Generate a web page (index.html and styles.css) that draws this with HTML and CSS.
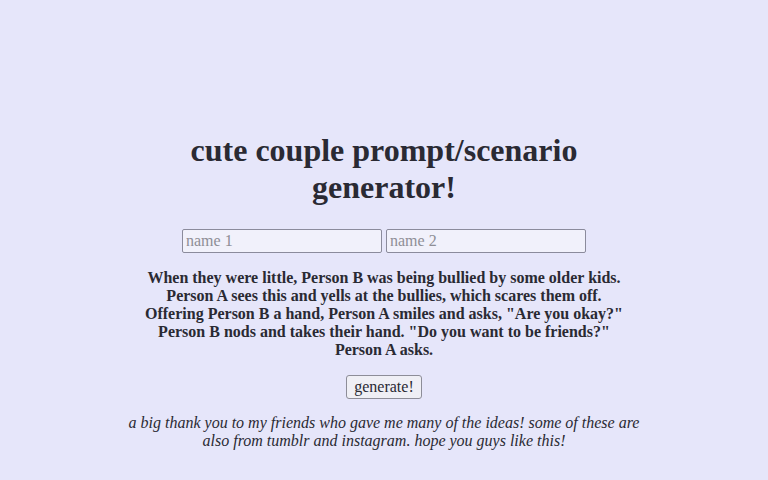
FILE: index.html
```html
<!DOCTYPE html>
<html lang="en">
<head>
<meta charset="utf-8">
<title>cute couple prompt/scenario generator!</title>
<link rel="stylesheet" href="styles.css">
</head>
<body>
<main class="page">
  <h1 class="title">cute couple prompt/scenario generator!</h1>
  <div class="names">
    <input class="name-input" type="text" placeholder="name 1">
    <input class="name-input" type="text" placeholder="name 2">
  </div>
  <p class="prompt">When they were little, Person B was being bullied by some older kids. Person A sees this and yells at the bullies, which scares them off. Offering Person B a hand, Person A smiles and asks, "Are you okay?" Person B nods and takes their hand. "Do you want to be friends?" Person A asks.</p>
  <button class="generate" type="button">generate!</button>
  <p class="thanks">a big thank you to my friends who gave me many of the ideas! some of these are also from tumblr and instagram. hope you guys like this!</p>
</main>
</body>
</html>
```

FILE: styles.css
```css
html, body {
  margin: 0;
  background: #e6e6fa;
}

body {
  font-family: "Liberation Serif", "Times New Roman", serif;
  color: #2a2a33;
  font-size: 16px;
}

.page {
  width: 520px;
  margin: 0 auto;
  padding-top: 111px;
  text-align: center;
}

.title {
  font-size: 32px;
  font-weight: bold;
  line-height: 37px;
  margin: 21px 0 23px;
}

.names {
  display: flex;
  justify-content: center;
  gap: 4px;
}

.name-input {
  width: 200px;
  height: 24px;
  box-sizing: border-box;
  padding: 1px 3px;
  font-family: inherit;
  font-size: 16px;
  color: #2a2a33;
  background: #f1f1fb;
  border: 1px solid #8b8b9c;
  border-radius: 2px;
}

.name-input::placeholder {
  color: #8e8e96;
}

.prompt {
  max-width: 482px;
  font-weight: bold;
  line-height: 18px;
  margin: 16px auto;
}

.generate {
  font-family: inherit;
  font-size: 16px;
  color: #2a2a33;
  background: #efeff5;
  border: 1px solid #8d8d98;
  border-radius: 3px;
  padding: 1px 7px;
  height: 24px;
}

.thanks {
  font-style: italic;
  line-height: 18px;
  margin: 15px 0 0;
}
```
